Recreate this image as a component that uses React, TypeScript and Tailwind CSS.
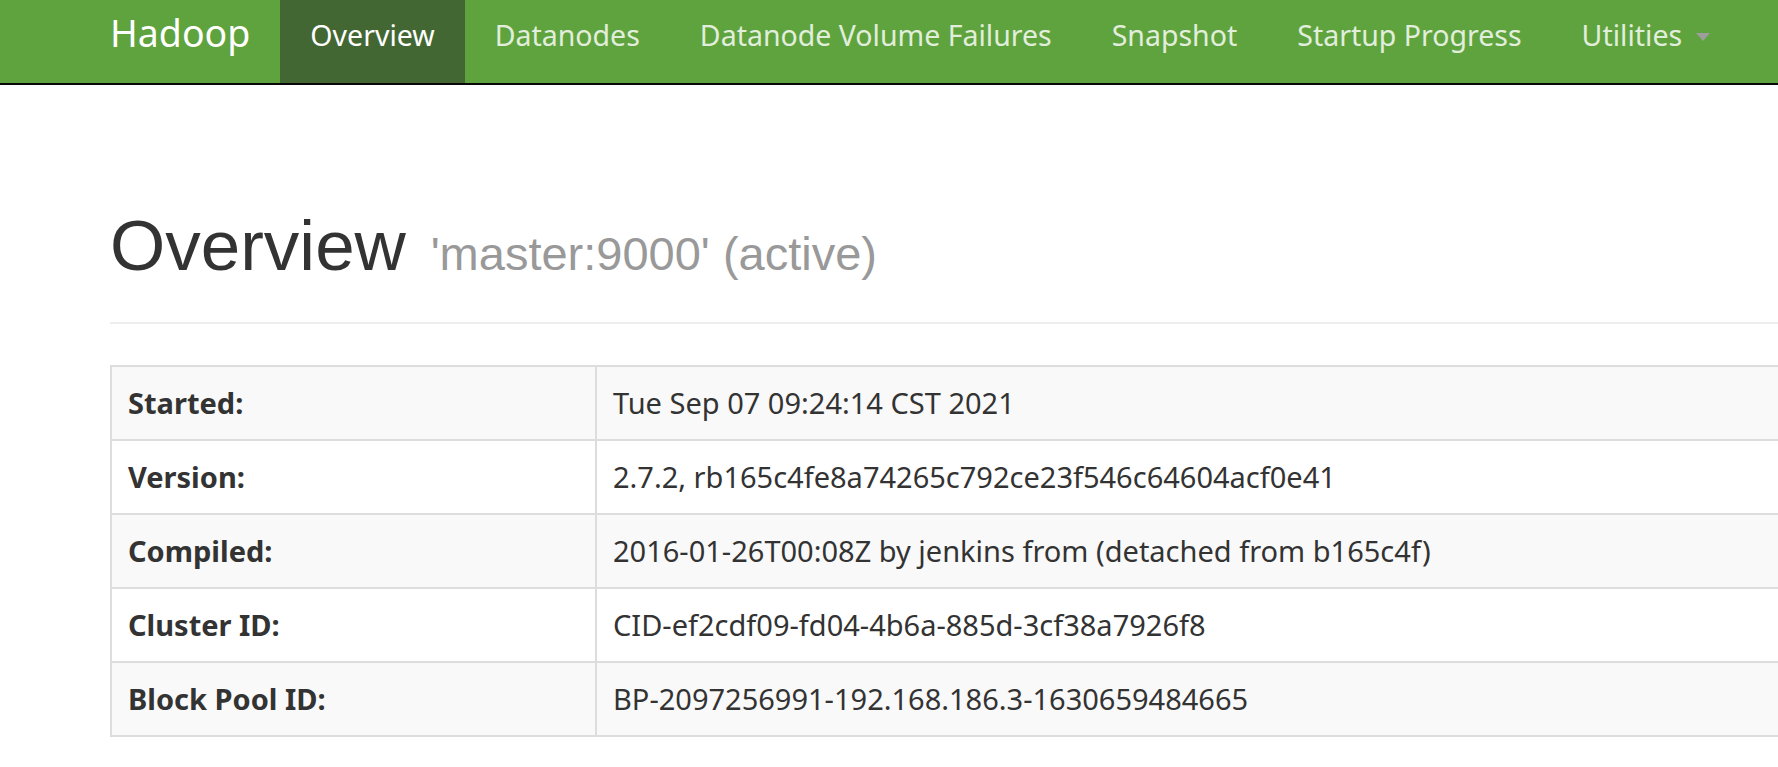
import React from "react";

const navLinks = [
  { label: "Overview", active: true },
  { label: "Datanodes" },
  { label: "Datanode Volume Failures" },
  { label: "Snapshot" },
  { label: "Startup Progress" },
];

const rows: [string, string][] = [
  ["Started:", "Tue Sep 07 09:24:14 CST 2021"],
  ["Version:", "2.7.2, rb165c4fe8a74265c792ce23f546c64604acf0e41"],
  ["Compiled:", "2016-01-26T00:08Z by jenkins from (detached from b165c4f)"],
  ["Cluster ID:", "CID-ef2cdf09-fd04-4b6a-885d-3cf38a7926f8"],
  ["Block Pool ID:", "BP-2097256991-192.168.186.3-1630659484665"],
];

export default function App() {
  return (
    <div className="w-full min-h-screen overflow-hidden bg-white">
      <nav
        className="h-[85px] bg-[#5fa33e] border-b-2 border-[#080808] flex items-stretch pl-[80px]"
        style={{ fontFamily: '"Noto Sans", "Open Sans", sans-serif' }}
      >
        <a className="px-[30px] pt-[8px] text-[37.5px] leading-[50px] text-white">Hadoop</a>
        {navLinks.map((l) => (
          <a
            key={l.label}
            className={
              l.active
                ? "px-[30px] pt-[15px] text-[28.5px] leading-[40px] text-white bg-[#436733] whitespace-nowrap"
                : "px-[30px] pt-[15px] text-[28.5px] leading-[40px] text-[#e2eedc] whitespace-nowrap"
            }
          >
            {l.label}
          </a>
        ))}
        <a className="px-[30px] pt-[15px] text-[28.5px] leading-[40px] text-[#e2eedc] whitespace-nowrap flex items-start">
          <span>Utilities</span>
          <span className="ml-[14px] mt-[18px] w-0 h-0 border-x-[7px] border-x-transparent border-t-[8px] border-t-[#9d9d9d]" />
        </a>
      </nav>

      <div className="pl-[110px]">
        <div className="mt-[121px] pb-[29px] border-b-2 border-[#eeeeee]">
          <h1
            className="text-[71px] leading-[79px] text-[#333333] whitespace-nowrap"
            style={{ fontFamily: '"Liberation Sans", Arial, sans-serif' }}
          >
            Overview{" "}
            <small className="ml-[5px] text-[47px] text-[#999999]">'master:9000' (active)</small>
          </h1>
        </div>

        <div
          className="mt-[41px] w-[1900px] border-2 border-[#dddddd] text-[29px] leading-[40px] text-[#333333]"
          style={{ fontFamily: '"Noto Sans", "Open Sans", sans-serif' }}
        >
          {rows.map(([k, v], i) => (
            <div
              key={k}
              className={
                (i % 2 === 0 ? "bg-[#f9f9f9] " : "bg-white ") +
                (i > 0 ? "border-t-2 border-[#dddddd] " : "") +
                "flex"
              }
            >
              <div className="w-[485px] shrink-0 border-r-2 border-[#dddddd] px-[16px] py-[16px] font-bold">
                {k}
              </div>
              <div className="px-[16px] py-[16px] whitespace-nowrap">{v}</div>
            </div>
          ))}
        </div>
      </div>
    </div>
  );
}
